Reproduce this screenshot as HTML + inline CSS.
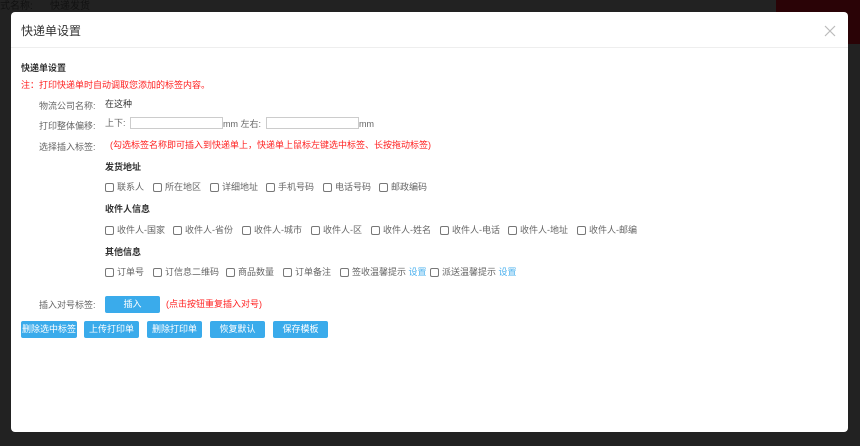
<!DOCTYPE html>
<html><head><meta charset="utf-8"><style>
*{margin:0;padding:0;box-sizing:border-box}
body{width:860px;height:446px;background:#222;position:relative;overflow:hidden;font-family:"Liberation Sans","Noto Sans CJK SC",sans-serif;font-size:9px;color:#666}
.a{position:absolute;white-space:nowrap;line-height:12px}
.m{position:absolute;left:11px;top:12px;width:837px;height:420px;background:#fff;border-radius:4px}
.cb{position:absolute;width:9px;height:9px;border:1px solid #777;border-radius:2px;background:#fff}
.b{position:absolute;background:#3aabeb;color:#fff;text-align:center;line-height:17px;height:17px;border-radius:2px;font-size:9px}
.r{color:#f22}
.bold{font-weight:bold;color:#333}
.in{position:absolute;height:12px;border:1px solid #ccc;background:#fff}
</style></head><body>
<div class="a" style="left:0;top:1px;color:#111;font-size:10px">式名称:</div>
<div class="a" style="left:50px;top:1px;color:#111;font-size:10px">快递发货</div>
<div style="position:absolute;left:776px;top:0;width:84px;height:44px;background:#2a0306"></div>
<div class="m"></div>
<div class="a" style="left:21px;top:24px;font-size:12px;line-height:15px;color:#333">快递单设置</div>
<svg style="position:absolute;left:824px;top:25px" width="12" height="12"><path d="M1 1L11 11M11 1L1 11" stroke="#bbb" stroke-width="1.2"/></svg>
<div style="position:absolute;left:11px;top:47px;width:837px;height:1px;background:#eee"></div>
<div class="a bold" style="left:21px;top:62px">快递单设置</div>
<div class="a r" style="left:21px;top:79px">注：打印快递单时自动调取您添加的标签内容。</div>
<div class="a" style="left:39px;top:100px">物流公司名称:</div>
<div class="a" style="left:105px;top:98px;color:#333">在这种</div>
<div class="a" style="left:39px;top:120px">打印整体偏移:</div>
<div class="a" style="left:105px;top:117px">上下:</div>
<div class="in" style="left:130px;top:117px;width:93px"></div>
<div class="a" style="left:223px;top:118px">mm 左右:</div>
<div class="in" style="left:266px;top:117px;width:93px"></div>
<div class="a" style="left:359px;top:118px">mm</div>
<div class="a" style="left:39px;top:141px">选择插入标签:</div>
<div class="a r" style="left:110px;top:139px">(勾选标签名称即可插入到快递单上，快递单上鼠标左键选中标签、长按拖动标签)</div>
<div class="a bold" style="left:105px;top:161px">发货地址</div>
<div class="cb" style="left:105px;top:183px"></div><div class="a" style="left:117px;top:181px">联系人</div>
<div class="cb" style="left:153px;top:183px"></div><div class="a" style="left:165px;top:181px">所在地区</div>
<div class="cb" style="left:210px;top:183px"></div><div class="a" style="left:222px;top:181px">详细地址</div>
<div class="cb" style="left:266px;top:183px"></div><div class="a" style="left:278px;top:181px">手机号码</div>
<div class="cb" style="left:323px;top:183px"></div><div class="a" style="left:335px;top:181px">电话号码</div>
<div class="cb" style="left:379px;top:183px"></div><div class="a" style="left:391px;top:181px">邮政编码</div>
<div class="a bold" style="left:105px;top:203px">收件人信息</div>
<div class="cb" style="left:105px;top:226px"></div><div class="a" style="left:117px;top:224px">收件人-国家</div>
<div class="cb" style="left:173px;top:226px"></div><div class="a" style="left:185px;top:224px">收件人-省份</div>
<div class="cb" style="left:242px;top:226px"></div><div class="a" style="left:254px;top:224px">收件人-城市</div>
<div class="cb" style="left:311px;top:226px"></div><div class="a" style="left:323px;top:224px">收件人-区</div>
<div class="cb" style="left:371px;top:226px"></div><div class="a" style="left:383px;top:224px">收件人-姓名</div>
<div class="cb" style="left:440px;top:226px"></div><div class="a" style="left:452px;top:224px">收件人-电话</div>
<div class="cb" style="left:508px;top:226px"></div><div class="a" style="left:520px;top:224px">收件人-地址</div>
<div class="cb" style="left:577px;top:226px"></div><div class="a" style="left:589px;top:224px">收件人-邮编</div>
<div class="a bold" style="left:105px;top:246px">其他信息</div>
<div class="cb" style="left:105px;top:268px"></div><div class="a" style="left:117px;top:266px">订单号</div>
<div class="cb" style="left:153px;top:268px"></div><div class="a" style="left:165px;top:266px">订信息二维码</div>
<div class="cb" style="left:226px;top:268px"></div><div class="a" style="left:238px;top:266px">商品数量</div>
<div class="cb" style="left:283px;top:268px"></div><div class="a" style="left:295px;top:266px">订单备注</div>
<div class="cb" style="left:340px;top:268px"></div><div class="a" style="left:352px;top:266px">签收温馨提示 <span style="color:#4ab0ee">设置</span></div>
<div class="cb" style="left:430px;top:268px"></div><div class="a" style="left:442px;top:266px">派送温馨提示 <span style="color:#4ab0ee">设置</span></div>
<div class="a" style="left:39px;top:299px">插入对号标签:</div>
<div class="b" style="left:105px;top:296px;width:55px">插入</div>
<div class="a r" style="left:166px;top:298px">(点击按钮重复插入对号)</div>
<div class="b" style="left:21px;top:321px;width:56px">删除选中标签</div>
<div class="b" style="left:84px;top:321px;width:55px">上传打印单</div>
<div class="b" style="left:147px;top:321px;width:55px">删除打印单</div>
<div class="b" style="left:210px;top:321px;width:55px">恢复默认</div>
<div class="b" style="left:273px;top:321px;width:55px">保存模板</div>
</body></html>
